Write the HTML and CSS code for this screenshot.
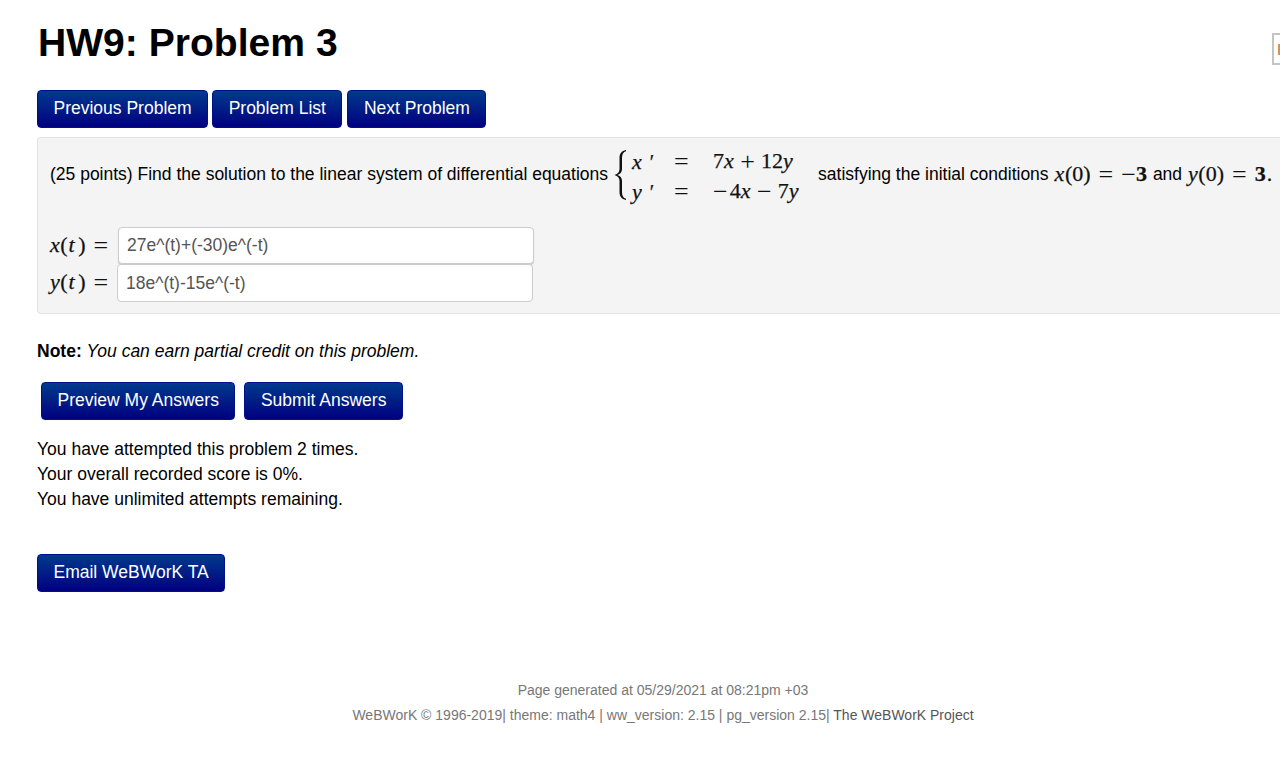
FILE: index.html
```html
<!DOCTYPE html>
<html lang="en">
<head>
<meta charset="utf-8">
<title>HW9: Problem 3</title>
<link rel="stylesheet" href="styles.css">
</head>
<body>
<main class="page">
  <header class="head">
    <h1 class="title">HW9: Problem 3</h1>
    <div class="side-tab"><span class="side-mark"></span></div>
  </header>
  <nav class="nav-row">
    <a class="btn">Previous Problem</a>
    <a class="btn">Problem List</a>
    <a class="btn">Next Problem</a>
  </nav>
  <section class="problem">
    <div class="statement">
      <span>(25 points) Find the solution to the linear system of differential equations</span>
      <span class="system">
        <svg class="brace" width="14" height="52" viewBox="0 0 14 52"><path d="M13 1C8.500 2 6.500 4.500 6.500 9V20C6.500 23 5 25 1.500 26C5 27 6.500 29 6.500 32V43C6.500 47.500 8.500 50 13 51V49.800C10.300 49 9 47 9 43V32C9 29 7.500 27 4.500 26C7.500 25 9 23 9 20V9C9 5 10.300 3 13 2.200Z" fill="#111"/></svg>
        <span class="eqs">
          <span class="m"><i>x</i> <span class="prime">′</span></span><span class="m op-cell">=</span><span class="m"><span>7</span><i>x</i><span class="op op-sm">+</span>12<i>y</i></span>
          <span class="m"><i>y</i> <span class="prime">′</span></span><span class="m op-cell">=</span><span class="m"><span class="neg neg-lead">−</span>4<i>x</i><span class="op op-sm">−</span>7<i>y</i></span>
        </span>
      </span>
      <span class="cond">satisfying the initial conditions</span>
      <span class="m inline-math"><i>x</i>(0)<span class="op">=</span><span class="neg">−</span><b>3</b></span>
      <span class="and">and</span>
      <span class="m inline-math"><i>y</i>(0)<span class="op">=</span><b>3</b><span class="dot">.</span></span>
    </div>
    <div class="answer answer-x">
      <label class="m ans-label"><i>x</i>(<i class="t">t</i>)<span class="op">=</span></label>
      <span class="field field-x">27e^(t)+(-30)e^(-t)</span>
    </div>
    <div class="answer answer-y">
      <label class="m ans-label"><i>y</i>(<i class="t">t</i>)<span class="op">=</span></label>
      <span class="field">18e^(t)-15e^(-t)</span>
    </div>
  </section>
  <p class="note"><b>Note:</b> <i>You can earn partial credit on this problem.</i></p>
  <div class="submit-row">
    <a class="btn">Preview My Answers</a>
    <a class="btn">Submit Answers</a>
  </div>
  <div class="score">
    <div>You have attempted this problem 2 times.</div>
    <div>Your overall recorded score is 0%.</div>
    <div>You have unlimited attempts remaining.</div>
  </div>
  <a class="btn btn-email">Email WeBWorK TA</a>
  <footer class="footer">
    <div>Page generated at 05/29/2021 at 08:21pm +03</div>
    <div>WeBWorK © 1996-2019| theme: math4 | ww_version: 2.15 | pg_version 2.15| <span class="link">The WeBWorK Project</span></div>
  </footer>
</main>
</body>
</html>
```

FILE: styles.css
```css
* { box-sizing: border-box; }
html, body { margin: 0; height: 760px; overflow: hidden; background: #fff; }
body { font-family: "Liberation Sans", Arial, sans-serif; font-size: 17.5px; color: #000; }
.page { padding-left: 37px; width: 1280px; }
.head { height: 90px; position: relative; }
.title { margin: 0 0 0 1px; padding-top: 19px; font-size: 39.1px; line-height: 48px; font-weight: 700; }
.side-tab { position: absolute; left: 1235px; top: 33px; width: 11px; height: 32px; border: 2px solid #c4c4c4; border-right: 0; background: #fff; display: flex; align-items: center; padding-left: 4px; }
.side-mark { width: 4px; height: 11px; background: linear-gradient(90deg, #d9924a 50%, #6f8fb0 50%); }
.nav-row { display: flex; gap: 4px; height: 38px; }
.nav-row .btn:last-child { margin-left: 1px; }
.btn { display: inline-flex; align-items: center; justify-content: center; height: 38px; padding: 0 15.5px 2px; color: #fff; font-size: 17.5px; border-radius: 4px; border: 1px solid #00108a; background: linear-gradient(#003a8c, #000080); white-space: nowrap; }
.problem { margin-top: 9px; width: 1243px; height: 177px; background: #f4f4f4; border: 1px solid #e3e3e3; border-right: 0; border-radius: 4px 0 0 4px; padding: 0 11px; }
.statement { display: flex; align-items: center; height: 72px; padding: 1px 0 0 1px; white-space: nowrap; }
.m { font-family: "Liberation Serif", "DejaVu Serif", serif; font-size: 22px; line-height: 1; color: #111; -webkit-text-stroke: 0.25px #111; }
.m i { font-weight: 400; letter-spacing: 0.5px; }
.m b { font-weight: 700; }
.system { display: inline-flex; align-items: center; margin-left: 5px; }
.brace { margin-right: 5px; flex: none; }
.eqs { display: grid; grid-template-columns: 42px 39px 86px; grid-auto-rows: 30px; align-items: center; position: relative; top: 2px; }
.op-cell { font-size: 26px; -webkit-text-stroke: 0; }
.op { display: inline-block; font-size: 26px; line-height: 1; vertical-align: -2px; margin: 0 8px; -webkit-text-stroke: 0; }
.op-sm { margin: 0 6px; }
.neg { display: inline-block; font-size: 26px; line-height: 1; vertical-align: -2px; -webkit-text-stroke: 0; }
.neg-lead { margin-right: 2px; }
.prime { font-size: 20px; margin-left: 2px; }
.cond { margin-left: 19px; }
.inline-math { margin-left: 6px; }
.and { margin-left: 6px; }
.dot { margin-left: 1px; }
.t { margin: 0 3px 0 1px; }
.answer { display: flex; align-items: center; height: 37px; }
.answer-x { margin-top: 17px; }
.answer-y { height: 38px; }
.ans-label { width: 68px; padding-left: 1px; white-space: nowrap; flex: none; }
.ans-label .op { margin: 0 0 0 8px; }
.field { width: 416px; height: 37px; padding: 0 8px; display: flex; align-items: center; background: #fff; border: 1px solid #ccc; border-radius: 4px; color: #555; font-size: 17.5px; }
.answer-y .field { height: 38px; }
.field-x { margin-left: 1px; box-shadow: 0 1px 1px rgba(0,0,0,.18); }
.note { margin: 25px 0 0; line-height: 25px; }
.submit-row { display: flex; gap: 9px; margin: 18px 0 0 4px; }
.score { margin-top: 17px; line-height: 25px; }
.btn-email { margin-top: 42px; }
.footer { margin-top: 86px; width: 1252px; text-align: center; color: #777; font-size: 14px; line-height: 25px; }
.link { color: #555; }
```
